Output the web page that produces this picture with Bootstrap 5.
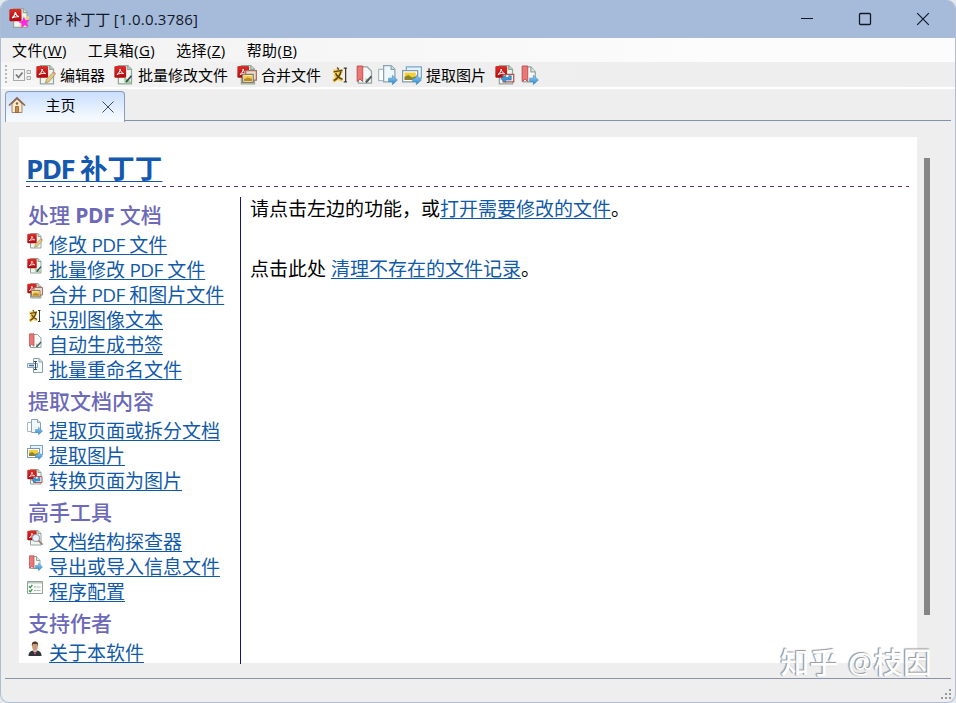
<!DOCTYPE html>
<html lang="zh-CN">
<head>
<meta charset="utf-8">
<meta name="viewport" content="width=device-width, initial-scale=1">
<title>PDF 补丁丁</title>
<link href="https://cdn.jsdelivr.net/npm/bootstrap@5.3.0/dist/css/bootstrap.min.css" rel="stylesheet">
<style>
body{font-family:"Open Sans","Noto Sans CJK SC",sans-serif;font-size:15px;line-height:20px;color:#000;background:#e3e7ee;width:956px;height:703px}
svg{flex:none;display:block}
.win{width:956px;height:703px;background:#eee;border:1px solid #adbdd4;border-top:0;border-radius:9px}
.titlebar{height:38px;background:#a6bbd9;padding-left:9px;color:#10182c;margin:0 -1px}
.titlebar .cap{margin-left:4px;letter-spacing:-.2px;font-size:15px}
.titlebar .ver{letter-spacing:.22px}
.ctl{width:58px}
.menubar{height:24px;padding-left:11px;background:linear-gradient(90deg,#f1f1f1,#fcfcfc 75%);gap:21px}
.menubar span{letter-spacing:.42px}
.tools{height:25px;padding-left:4px;background:linear-gradient(90deg,#f6f6f6,#efefef 30%,#eee)}
.grip{width:2px;height:20px;margin-right:5px;background:repeating-linear-gradient(#b8b8b8 0 2px,transparent 2px 4px)}
.tool{gap:4px;margin-right:9px}
.ico{width:20px;height:20px}
.strip{height:34px;border-top:2px solid #fff;padding:2px 4px 0}
.hometab{width:120px;height:31px;border:1px solid #8a9cbc;border-bottom:0;border-radius:4px 4px 0 0;background:linear-gradient(#c9deff,#f4f9ff 85%);padding:0 10px 0 2px}
.hometab .name{padding:0 7px 4px 0}
.rest{border-bottom:1px solid #8490ae;height:30px}
.work{height:558px;margin:0 4px;border:solid #8b93a8;border-width:0 0 1px;padding:16px 20px 15px 14px}
.page{width:898px;height:526px;background:#fff;padding:13px 8px 0 7px}
.thumb{width:6px;height:457px;background:#858585;margin:21px 0 0 7px}
.page a{color:#125aa8;text-decoration:underline;text-decoration-thickness:1px;text-underline-offset:2px;text-decoration-skip-ink:none}
.brand-title{font-size:27.5px;line-height:36px;height:36px;padding-top:1px;font-weight:600;margin:0}
.page .brand-title a{text-underline-offset:2px;color:#1459ae}
.brand-title i,.side i{font-style:normal}
.brand-title .lat{letter-spacing:-1.5px;font-weight:700}
.dash{height:1px;background:repeating-linear-gradient(90deg,#6b2a78 0 4px,transparent 4px 8px)}
.cols{height:467px;margin-top:10px}
.side{width:214px}
.side h2{font-size:21px;line-height:28px;height:36px;padding:4px 0 0 2px;font-weight:500;color:#6c69b8;margin:0}
.side h2 .lat{font-weight:700;letter-spacing:-.3px}
.side ul{padding-left:1px}
.side li{height:25px;font-size:19px;line-height:25px;gap:6px;white-space:nowrap}
.side li svg{width:16px;height:16px}
.main{border-left:1px solid #14147c;padding-left:9px;font-size:19px;line-height:24px}
.main p{margin:0 0 36px}
.lat{letter-spacing:-.55px}
.status{height:23px}
.wm{right:23px;bottom:22px;font-size:29px;line-height:34px;font-weight:500;color:#fff;text-shadow:-1px -1px 1px #999,-1px 0 1px #999;white-space:nowrap;word-spacing:2px}
.corner{right:4px;bottom:3px}
</style>
</head>
<body class="overflow-hidden">
<svg width="0" height="0" class="position-absolute">
<defs>
<linearGradient id="rd" x2="0" y2="1"><stop stop-color="#dc2f28"/><stop offset="1" stop-color="#ae080d"/></linearGradient>
<linearGradient id="bl" x2="0" y2="1"><stop stop-color="#9bd2f6"/><stop offset="1" stop-color="#2c83c9"/></linearGradient>
<g id="sheet"><path d="M3.5.500h7.500l3 3v11.500H3.500z" fill="#f0f5ee" stroke="#91a69d"/><path d="M11 .5v3h3" fill="#d0dfd3" stroke="#91a69d"/></g>
<g id="pdf"><rect x=".3" y=".8" width="9.400" height="9.400" rx="1" fill="url(#rd)"/><path d="M2.300 7.700C4 6.500 4.800 5 4.900 3.200 5.200 5 6 6.200 7.700 6.800c-2-.3-3.600 0-5.400.9" fill="none" stroke="#fff" stroke-width=".8"/></g>
<g id="arrow"><path d="M8.500 10.500h3v-2.300l4 3.800-4 3.700v-2.400h-3z" fill="url(#bl)" stroke="#3f8ec4" stroke-width=".5"/></g>
<g id="pic"><rect x="3.500" y="1.500" width="12" height="9" fill="#e3f2fb" stroke="#79a8c8"/><rect x=".5" y="4.500" width="12" height="9" fill="#fff" stroke="#829aa9"/><path d="M2 6h9v6H2z" fill="#f3cf39"/><path d="M2 12V9.500l3-1.500 3 2 3-1v3z" fill="#8c8130"/></g>
</defs>
<symbol id="i-edit" viewBox="0 0 16 16"><use href="#sheet"/><use href="#pdf"/><path d="M13.800 5.700 8.500 11.300l-1 3 3-1 4.700-5.800z" fill="#e7c981" stroke="#a08b5e" stroke-width=".6"/><path d="m13.700 5.400 1.700 1.900" stroke="#dc8a80" stroke-width="1.300"/></symbol>
<symbol id="i-batch" viewBox="0 0 16 16"><use href="#sheet"/><use href="#pdf"/><path d="M8 10.500c2-.5 3 .5 3.500 1.500 1 .2 2 1 2.300 2.300H8.500z" fill="#9bcc9a"/><path d="m9.700 13.600 4.300-5" stroke="#33434a" stroke-width="1.300"/></symbol>
<symbol id="i-merge" viewBox="0 0 16 16"><use href="#sheet"/><use href="#pdf"/><path d="M7 4.500h8.500v7.500H7z" fill="#eadbd0" stroke="#a57165"/><path d="M4.500 7.500h8.500v6.300H4.500z" fill="#f7ecd2" stroke="#917c54"/><path d="M5.500 8.500h6.500v4.300H5.500z" fill="#f4cc4f"/><path d="M5.500 12.800v-1.500l3-1.300 3.500 1v1.800z" fill="#b78d28"/></symbol>
<symbol id="i-ocr" viewBox="0 0 16 16"><path d="M2.500 5H10M8.500 5.500C7.500 8.500 5.500 11 2.500 13M4 7c1 2.500 3 4 6 5" fill="none" stroke="#f6c83e" stroke-width="2.800"/><path d="m5.800 2 1.200 1.700M3 5.500l7-1.300M8.800 5C8 8.500 6 11 3 12.500M4.500 6.500c1 2.300 2.700 4 5.500 5" fill="none" stroke="#5c4518" stroke-width="1.200"/><path d="M12.500 2.500v11M11 2.500h2.500M11 13.500h2.500" stroke="#3f3827"/></symbol>
<symbol id="i-mark" viewBox="0 0 16 16"><path d="M3.500 1.500h7l3.500 3.500v9.500H3.500z" fill="#f7faf9" stroke="#91a69d"/><path d="M2.500.8H7v12.500l-2.200-2-2.300 2z" fill="#ec7775" stroke="#b9494b" stroke-width=".7"/><path d="M9 10.500c2 0 2.500 1 3 2.500l-3 1z" fill="#a7d5a0"/><path d="m9.500 14 4.500-5" stroke="#535a62" stroke-width="1.500"/></symbol>
<symbol id="i-split" viewBox="0 0 16 16"><path d="M.5 3.500h7v9h-7z" fill="#fff" stroke="#a9bac1"/><path d="M4.500.5h6l3 3v10h-9z" fill="#eef8fb" stroke="#8aa5b0"/><path d="M10.500.5v3h3" fill="#d5e8ed" stroke="#8aa5b0"/><use href="#arrow"/></symbol>
<symbol id="i-pic" viewBox="0 0 16 16"><use href="#pic"/><use href="#arrow"/></symbol>
<symbol id="i-conv" viewBox="0 0 16 16"><use href="#sheet"/><use href="#pdf"/><path d="M6.500 7.500h8.500v6H6.500z" fill="#e4f1f7" stroke="#b4534d"/><path d="M13 8.500v3.500H8.500v2L4.500 11l4-3v2H11V8.500z" fill="#3f98d3" stroke="#236b9d" stroke-width=".4"/></symbol>
<symbol id="i-export" viewBox="0 0 16 16"><path d="M3.500 1.500h6l3.500 4v8h-9.500z" fill="#f7faf9" stroke="#91a69d"/><path d="M9.500 1.500v4h3.500" fill="#deebe8" stroke="#91a69d"/><path d="M2.500.8H7v12.500l-2.200-2-2.300 2z" fill="#ec7775" stroke="#b9494b" stroke-width=".7"/><use href="#arrow"/></symbol>
<symbol id="i-rename" viewBox="0 0 16 16"><path d="M6.500.5h5.500l3.500 3.500v10.500h-9z" fill="#f4f9fa" stroke="#8aa0a9"/><path d="M12 .5V4h3.500" fill="none" stroke="#8aa0a9"/><path d="M.5 5.500h10v4H.5z" fill="#e5eff8" stroke="#8da0b0"/><path d="M2 7.500h5" stroke="#476ea3" stroke-width="1.500"/><path d="M8.500 3.500v8M7 3.500h3M7 11.500h3" stroke="#364a64"/></symbol>
<symbol id="i-inspect" viewBox="0 0 16 16"><use href="#sheet"/><use href="#pdf"/><circle cx="9" cy="8" r="3.500" fill="#e7f2fa" stroke="#9c9fae" stroke-width="1.100"/><path d="m11.500 10.500 4 4.200" stroke="#9d7771" stroke-width="1.800"/></symbol>
<symbol id="i-config" viewBox="0 0 16 16"><path d="M.5 1.500h15v12H.5z" fill="#f8fbf8" stroke="#94a199"/><path d="M1 2h14v1.500H1z" fill="#bac8bf"/><path d="m2 6.300 1.300 1.300 2-2.600M2 10.500l1.300 1.200 2-2.500" fill="none" stroke="#38914c" stroke-width="1.300"/><path d="M7 7h6.500M7 10.500h6.500" stroke="#a2aba5" stroke-dasharray="2 .7"/></symbol>
<symbol id="i-user" viewBox="0 0 16 16"><path d="M1.500 15c0-4 2-5 4.500-5.500h4c2.500.5 4.500 1.500 4.500 5.500z" fill="#30343b"/><path d="m6 9.500 2 4 2-4z" fill="#f5f5f5"/><path d="m8 10-.8 1.200.8 2.600.8-2.600z" fill="#bd2c31"/><ellipse cx="8" cy="5.500" rx="2.800" ry="4" fill="#c99a77"/><path d="M5 5.500C4.300 1.800 6 .5 8 .5s3.700 1.300 3 5L10 3H6z" fill="#55382b"/></symbol>
</svg>

<div class="win position-relative overflow-hidden">
  <header class="titlebar d-flex align-items-center">
    <svg width="22" height="22" viewBox="0 0 17 17"><use href="#sheet"/><path d="m8 14 6-8 2 1-5 8z" fill="#f0ce82"/><use href="#pdf"/><path d="m11.500 6.500 1.200 3 3.300-.3-2.300 2.400 1.500 3-3-1.200-2.600 2.200.2-3.400-2.900-1.600 3.300-.8z" fill="#ff28df"/></svg>
    <span class="cap me-auto">PDF 补丁丁 <span class="ver">[1.0.0.3786]</span></span>
    <span class="ctl d-flex justify-content-center"><svg width="14" height="14"><path d="M1 6.500h12" stroke="#10182c" stroke-width="1.200"/></svg></span>
    <span class="ctl d-flex justify-content-center"><svg width="14" height="14"><rect x="1.500" y="1.500" width="11" height="11" rx="1" fill="none" stroke="#10182c" stroke-width="1.300"/></svg></span>
    <span class="ctl d-flex justify-content-center"><svg width="14" height="14"><path d="m1.200 1.200 11.600 11.600m0-11.600L1.200 12.800" stroke="#10182c" stroke-width="1.200"/></svg></span>
    <span class="pe-1"></span>
  </header>
  <nav class="menubar d-flex align-items-center">
    <span>文件(<u>W</u>)</span><span>工具箱(<u>G</u>)</span><span>选择(<u>Z</u>)</span><span>帮助(<u>B</u>)</span>
  </nav>
  <div class="tools d-flex align-items-center">
    <span class="grip"></span>
    <svg width="20" height="16" class="me-1" viewBox="0 0 20 16"><rect x="1.500" y="2.500" width="11" height="11" fill="#f2f2f2" stroke="#a9a9a9"/><path d="m4 7.500 2.500 3 4-5" fill="none" stroke="#777" stroke-width="1.700"/><path d="M15 3.500h3.500v3H15zM15 9.500h3.500v3H15z" fill="#eee" stroke="#aaa"/></svg>
    <span class="tool d-flex align-items-center"><svg class="ico"><use href="#i-edit"/></svg>编辑器</span>
    <span class="tool d-flex align-items-center"><svg class="ico"><use href="#i-batch"/></svg>批量修改文件</span>
    <span class="tool d-flex align-items-center"><svg class="ico"><use href="#i-merge"/></svg>合并文件</span>
    <svg class="ico me-1"><use href="#i-ocr"/></svg>
    <svg class="ico me-1"><use href="#i-mark"/></svg>
    <svg class="ico me-1"><use href="#i-split"/></svg>
    <span class="tool d-flex align-items-center"><svg class="ico"><use href="#i-pic"/></svg>提取图片</span>
    <svg class="ico me-1"><use href="#i-conv"/></svg>
    <svg class="ico"><use href="#i-export"/></svg>
  </div>
  <div class="strip d-flex">
    <div class="hometab d-flex align-items-center justify-content-between">
      <svg class="mb-1" width="18" height="18" viewBox="0 0 18 18"><path d="M4 8v8.500h10V8L9 3z" fill="#fbe9cd" stroke="#a7876a"/><path d="M1 9.500 9 2l8 7.500" fill="none" stroke="#8a6a53" stroke-width="1.700"/><path d="M7.500 10.500h3v6h-3z" fill="#c98743" stroke="#80572f" stroke-width=".7"/><circle cx="9" cy="7.500" r="1.200" fill="#8c6034"/></svg>
      <span class="name">主页</span>
      <svg width="12" height="12"><path d="m.5.500 11 11m0-11-11 11" stroke="#444b59"/></svg>
    </div>
    <div class="rest flex-grow-1"></div>
  </div>
  <main class="work d-flex">
    <div class="page">
      <h1 class="brand-title"><a href="#"><i class="lat">PDF </i>补丁丁</a></h1>
      <div class="dash"></div>
      <div class="cols d-flex">
        <div class="side">
          <h2>处理<i class="lat"> PDF </i>文档</h2>
          <ul class="list-unstyled m-0">
            <li class="d-flex"><svg><use href="#i-edit"/></svg><a href="#">修改<i class="lat"> PDF </i>文件</a></li>
            <li class="d-flex"><svg><use href="#i-batch"/></svg><a href="#">批量修改<i class="lat"> PDF </i>文件</a></li>
            <li class="d-flex"><svg><use href="#i-merge"/></svg><a href="#">合并<i class="lat"> PDF </i>和图片文件</a></li>
            <li class="d-flex"><svg><use href="#i-ocr"/></svg><a href="#">识别图像文本</a></li>
            <li class="d-flex"><svg><use href="#i-mark"/></svg><a href="#">自动生成书签</a></li>
            <li class="d-flex"><svg><use href="#i-rename"/></svg><a href="#">批量重命名文件</a></li>
          </ul>
          <h2>提取文档内容</h2>
          <ul class="list-unstyled m-0">
            <li class="d-flex"><svg><use href="#i-split"/></svg><a href="#">提取页面或拆分文档</a></li>
            <li class="d-flex"><svg><use href="#i-pic"/></svg><a href="#">提取图片</a></li>
            <li class="d-flex"><svg><use href="#i-conv"/></svg><a href="#">转换页面为图片</a></li>
          </ul>
          <h2>高手工具</h2>
          <ul class="list-unstyled m-0">
            <li class="d-flex"><svg><use href="#i-inspect"/></svg><a href="#">文档结构探查器</a></li>
            <li class="d-flex"><svg><use href="#i-export"/></svg><a href="#">导出或导入信息文件</a></li>
            <li class="d-flex"><svg><use href="#i-config"/></svg><a href="#">程序配置</a></li>
          </ul>
          <h2>支持作者</h2>
          <ul class="list-unstyled m-0">
            <li class="d-flex"><svg><use href="#i-user"/></svg><a href="#">关于本软件</a></li>
          </ul>
        </div>
        <div class="main flex-grow-1">
          <p>请点击左边的功能，或<a href="#">打开需要修改的文件</a>。</p>
          <p>点击此处 <a href="#">清理不存在的文件记录</a>。</p>
        </div>
      </div>
    </div>
    <div class="thumb"></div>
  </main>
  <footer class="status"></footer>
  <div class="wm position-absolute">知乎 @枝因</div>
  <svg class="corner position-absolute" width="10" height="10"><path d="M8 0h2v2H8zM4 4h2v2H4zM8 4h2v2H8zM0 8h2v2H0zM4 8h2v2H4zM8 8h2v2H8z" fill="#999"/></svg>
</div>
<script src="https://cdn.jsdelivr.net/npm/bootstrap@5.3.0/dist/js/bootstrap.bundle.min.js"></script>
</body>
</html>
